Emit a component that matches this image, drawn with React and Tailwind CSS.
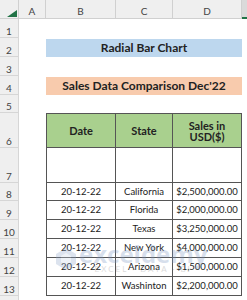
import React from "react";

const data = [
  ["California", "$2,500,000.00"],
  ["Florida", "$2,000,000.00"],
  ["Texas", "$3,250,000.00"],
  ["New York", "$4,000,000.00"],
  ["Arizona", "$1,500,000.00"],
  ["Washinton", "$2,200,000.00"],
];

function RowHead({ n }) {
  return (
    <div className="bg-[#efefef] border-b border-r border-[#d6d6d6] flex items-end justify-center pb-[1px] text-[10px] text-[#444] leading-none">
      {n}
    </div>
  );
}

function Blank() {
  return <div></div>;
}

export default function App() {
  const cell = "flex items-center justify-center text-[9.5px] text-[#222] leading-none whitespace-nowrap";
  const colHead = "bg-[#efefef] border-b border-r border-[#d0d0d0] flex items-end justify-center pb-[2px] text-[10px] text-[#444] leading-none";
  return (
    <div className="relative w-[247px] h-[300px] overflow-hidden bg-white" style={{ fontFamily: "Lato, 'Open Sans', sans-serif" }}>
      <div className="grid grid-cols-[19px_27px_70px_57px_69px_1fr] grid-rows-[19px_19px_19px_19px_19px_18px_35px_35px_18px_19px_19px_19px_19px_19px_1fr] h-[300px]">
        {/* header row */}
        <div className="bg-[#efefef] border-b border-r border-[#d0d0d0] relative">
          <svg className="absolute left-[7px] top-[10px]" width="10" height="7" viewBox="0 0 10 7">
            <polygon points="10,0 10,7 0,7" fill="#217346" />
          </svg>
        </div>
        <div className={colHead}>A</div>
        <div className={colHead}>B</div>
        <div className={colHead}>C</div>
        <div className={colHead}>D</div>
        <div className="bg-[#dadada] border-b-2 border-[#217346]"></div>

        {/* row 1 */}
        <RowHead n={1} />
        <Blank /><Blank /><Blank /><Blank /><Blank />

        {/* row 2 */}
        <RowHead n={2} />
        <Blank />
        <div className="col-span-3 mt-[1px] bg-[#bdd7ee] flex items-center justify-center text-[12px] font-bold text-[#222] leading-none">
          Radial Bar Chart
        </div>
        <Blank />

        {/* row 3 */}
        <RowHead n={3} />
        <Blank /><Blank /><Blank /><Blank /><Blank />

        {/* row 4 */}
        <RowHead n={4} />
        <Blank />
        <div className="col-span-3 mt-[1px] bg-[#f8cbad] flex items-center justify-center text-[12px] font-bold text-[#222] leading-none">
          Sales Data Comparison Dec'22
        </div>
        <Blank />

        {/* row 5 */}
        <RowHead n={5} />
        <Blank /><Blank /><Blank /><Blank /><Blank />

        {/* row 6 header */}
        <RowHead n={6} />
        <Blank />
        <div className={`${cell} bg-[#a9d08e] border border-[#555] font-bold text-[11px]`}>Date</div>
        <div className={`${cell} bg-[#a9d08e] border-y border-r border-[#555] font-bold text-[11px]`}>State</div>
        <div className={`${cell} bg-[#a9d08e] border-y border-r border-[#555] font-bold text-[11px] text-center leading-[15px]`}>
          Sales in<br />USD($)
        </div>
        <Blank />

        {/* row 7 empty */}
        <RowHead n={7} />
        <Blank />
        <div className="border-x border-b border-[#555]"></div>
        <div className="border-r border-b border-[#555]"></div>
        <div className="border-r border-b border-[#555]"></div>
        <Blank />

        {data.map(([st, amt], i) => (
          <React.Fragment key={i}>
            <RowHead n={8 + i} />
            <Blank />
            <div className={`${cell} border-x border-b border-[#555]`}>20-12-22</div>
            <div className={`${cell} border-r border-b border-[#555]`}>{st}</div>
            <div className={`${cell} border-r border-b border-[#555]`}>{amt}</div>
            <Blank />
          </React.Fragment>
        ))}

        {/* last row */}
        <div className="bg-[#efefef] border-r border-[#d6d6d6]"></div>
        <Blank /><Blank /><Blank /><Blank /><Blank />
      </div>

      {/* watermark */}
      <div className="absolute left-[56px] top-[243px] flex items-center gap-[3px] opacity-30 pointer-events-none">
        <svg width="20" height="22" viewBox="0 0 20 22">
          <polygon points="10,0 20,6 20,16 10,22 0,16 0,6" fill="#8fa6c8" />
          <polygon points="10,5 15,8 15,14 10,17 5,14 5,8" fill="#c9d6e8" />
        </svg>
        <div className="flex flex-col items-center">
          <span className="text-[24px] leading-[22px] font-bold text-[#7d97c2]" style={{ fontFamily: "'Open Sans', sans-serif" }}>exceldemy</span>
          <span className="text-[8px] leading-[9px] tracking-[2px] text-[#8a8a8a]">EXCEL · DATA · BI</span>
        </div>
      </div>
    </div>
  );
}
